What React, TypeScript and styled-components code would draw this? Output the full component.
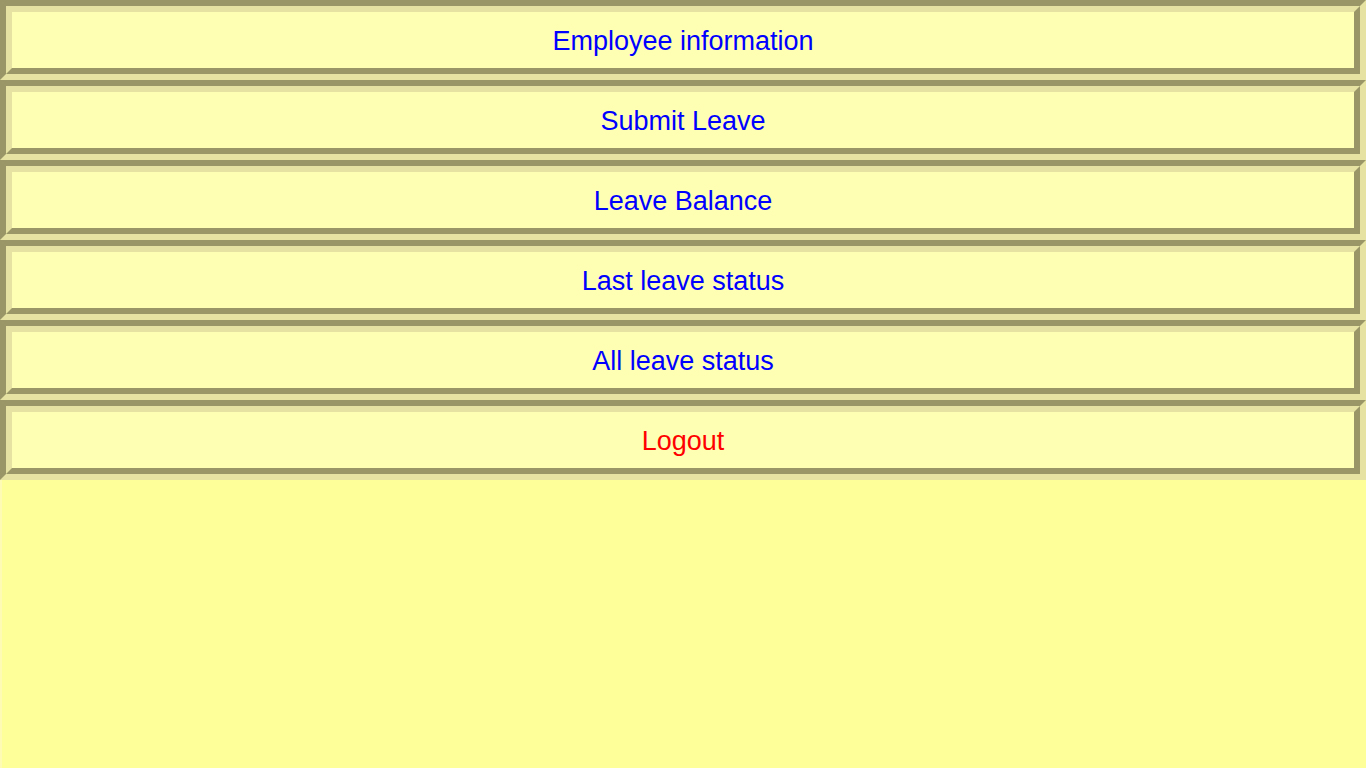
import React from "react";
import styled, { createGlobalStyle } from "styled-components";

const Colors = {
    PAGE: "#ffff99",
    FACE: "#ffffb3",
    DARK: "#9a9668",
    LIGHT: "#e6e3a2",
    LINK: "#0000ff",
    DANGER: "#ff0000",
};

const GlobalStyle = createGlobalStyle`
    html, body {
        margin: 0;
        padding: 0;
        height: 100%;
        background: ${Colors.PAGE};
    }
    #root {
        height: 100%;
    }
`;

const StyledPage = styled.div(() => ({
    display: "flex",
    flexDirection: "column",
    height: "100vh",
    width: "100%",
    overflow: "hidden",
}));

const StyledMenu = styled.nav(() => ({
    display: "flex",
    flexDirection: "column",
}));

// outer groove half: dark top/left, light bottom/right
const StyledMenuCell = styled.div(() => ({
    display: "flex",
    height: "80px",
    boxSizing: "border-box",
    borderStyle: "solid",
    borderWidth: "6px",
    borderColor: `${Colors.DARK} ${Colors.LIGHT} ${Colors.LIGHT} ${Colors.DARK}`,
}));

// inner groove half: light top/left, dark bottom/right
const StyledMenuButton = styled.button<{ danger?: boolean }>((props) => ({
    flex: 1,
    display: "flex",
    alignItems: "center",
    justifyContent: "center",
    margin: 0,
    padding: "2px 0 0 0",
    borderStyle: "solid",
    borderWidth: "6px",
    borderColor: `${Colors.LIGHT} ${Colors.DARK} ${Colors.DARK} ${Colors.LIGHT}`,
    backgroundColor: Colors.FACE,
    color: props.danger ? Colors.DANGER : Colors.LINK,
    fontFamily: "\"Liberation Sans\", Arial, sans-serif",
    fontSize: "27px",
    cursor: "pointer",
}));

const StyledContent = styled.main(() => ({
    flex: 1,
    backgroundColor: Colors.PAGE,
    borderLeft: "2px solid #fdfbb4",
}));

const menuItems = [
    { label: "Employee information" },
    { label: "Submit Leave" },
    { label: "Leave Balance" },
    { label: "Last leave status" },
    { label: "All leave status" },
    { label: "Logout", danger: true },
];

const App: React.FC = () => {
    return (
        <>
            <GlobalStyle />
            <StyledPage>
                <StyledMenu>
                    {menuItems.map(item => (
                        <StyledMenuCell key={item.label}>
                            <StyledMenuButton danger={item.danger}>
                                {item.label}
                            </StyledMenuButton>
                        </StyledMenuCell>
                    ))}
                </StyledMenu>
                <StyledContent />
            </StyledPage>
        </>
    )
}

export default App;
